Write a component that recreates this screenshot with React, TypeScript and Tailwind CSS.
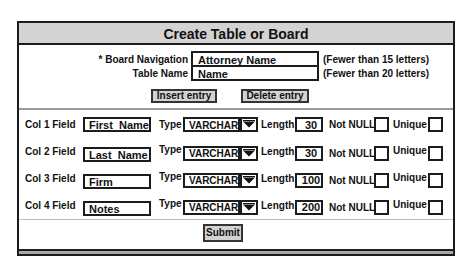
import React from "react";

const FONT = { fontFamily: '"Liberation Sans", Arial, sans-serif' };

function Box({ w, children, extra = "", text = "text-[11px]" }: { w: string; children?: React.ReactNode; extra?: string; text?: string }) {
  return (
    <div className={`${w} h-[15px] border-2 border-[#1c1c1c] bg-white flex items-center pl-[4px] ${text} font-bold leading-[11px] whitespace-nowrap ${extra}`}>
      <span className="block pt-[1px]">{children}</span>
    </div>
  );
}

function Dropdown() {
  return (
    <div className="w-[18px] h-[15px] border-2 border-[#1c1c1c] bg-white flex items-start justify-center pt-[1px]">
      <svg width="12" height="8" viewBox="0 0 12 8">
        <rect x="0" y="0" width="12" height="1.5" fill="#111" />
        <polygon points="0.5,2 11.5,2 6,7.5" fill="#111" />
      </svg>
    </div>
  );
}

function Check() {
  return <div className="w-[15px] h-[15px] border-2 border-[#1c1c1c] bg-white" />;
}

type Row = { n: number; field: string; len: string; shift: boolean };
const rows: Row[] = [
  { n: 1, field: "First_Name", len: "30", shift: false },
  { n: 2, field: "Last_Name", len: "30", shift: true },
  { n: 3, field: "Firm", len: "100", shift: true },
  { n: 4, field: "Notes", len: "200", shift: true },
];

export default function App() {
  return (
    <div className="w-[474px] h-[267px] bg-white pt-[21px] pl-[17px] text-[#111]" style={FONT}>
      <div className="w-[438px] border-2 border-[#1c1c1c] bg-white flex flex-col">
        <div className="h-[22px] bg-[#d3d3d3] border-b-2 border-[#1c1c1c] flex items-center justify-center text-[14px] font-bold leading-none pt-[1px]">
          Create Table or Board
        </div>
        <div className="pt-[6px] flex">
          <div className="w-[172px] flex flex-col items-end pr-[3px] text-[10px] font-bold leading-[13px] whitespace-nowrap pt-[2px]">
            <span className="h-[14px]">* Board Navigation</span>
            <span className="h-[14px]">Table Name</span>
          </div>
          <div className="w-[128px] border-2 border-[#1c1c1c] flex flex-col text-[11px] font-bold leading-[12px] whitespace-nowrap">
            <div className="h-[12px] pl-[5px] pt-[1px]">Attorney Name</div>
            <div className="h-[2px] bg-[#1c1c1c]" />
            <div className="h-[12px] pl-[5px] pt-[1px]">Name</div>
          </div>
          <div className="ml-[4px] flex flex-col text-[10px] font-bold leading-[13px] whitespace-nowrap pt-[2px]">
            <span className="h-[14px]">(Fewer than 15 letters)</span>
            <span className="h-[14px]">(Fewer than 20 letters)</span>
          </div>
        </div>
        <div className="flex mt-[8px] h-[14px]">
          <div className="ml-[132px] w-[66px] h-[14px] bg-[#d3d3d3] border-2 border-[#333] flex items-center justify-center text-[10px] font-bold leading-none whitespace-nowrap">
            Insert entry
          </div>
          <div className="ml-[24px] w-[68px] h-[14px] bg-[#d3d3d3] border-2 border-[#333] flex items-center justify-center text-[10px] font-bold leading-none whitespace-nowrap">
            Delete entry
          </div>
        </div>
        <div className="h-[5px]" />
        <div className="h-[2px] bg-[#9c9c9c]" />
        <div className="pt-[1px] flex flex-col">
          {rows.map((r) => (
            <div key={r.n} className="h-[27px] flex items-center text-[10px] font-bold whitespace-nowrap">
              <span className="ml-[6px] w-[58px]">Col {r.n} Field</span>
              <Box w="w-[68px]" extra={r.shift ? "mt-[6px]" : ""}>{r.field}</Box>
              <span className={`ml-[8px] w-[24px] ${r.shift ? "mt-[-4px]" : ""}`}>Type</span>
              <div className={`flex ${r.shift ? "mt-[3px]" : ""}`}>
                <Box w="w-[57px]" text="text-[10px]" extra="pl-[2px]">VARCHAR</Box>
                <Dropdown />
              </div>
              <span className="ml-[3px] w-[34px]">Length</span>
              <Box w="w-[28px]" extra={`justify-center pl-0 ${r.shift ? "mt-[3px]" : ""}`}>{r.len}</Box>
              <span className={`ml-[6px] w-[45px] ${r.shift ? "mt-[3px]" : ""}`}>Not NULL</span>
              <div className={r.shift ? "mt-[3px]" : ""}><Check /></div>
              <span className={`ml-[4px] w-[35px] ${r.shift ? "mt-[-3px]" : ""}`}>Unique</span>
              <div className={r.shift ? "mt-[3px]" : ""}><Check /></div>
            </div>
          ))}
        </div>
        <div className="h-[1px] bg-[#bdbdbd]" />
        <div className="pt-[4px] pb-[7px] flex">
          <div className="ml-[184px] w-[40px] h-[18px] bg-[#d3d3d3] border-2 border-[#333] flex items-center justify-center text-[10px] font-bold leading-none">
            Submit
          </div>
        </div>
        <div className="h-[2px] bg-[#1c1c1c]" />
        <div className="h-[3px] bg-[#a8a8a8]" />
      </div>
    </div>
  );
}
